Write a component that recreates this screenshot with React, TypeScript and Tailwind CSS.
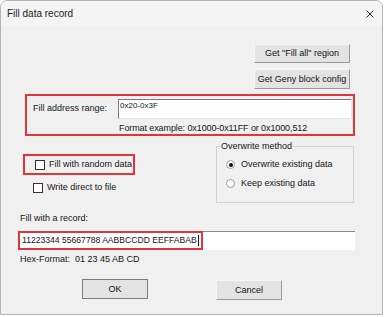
import React from 'react';

const font = "font-['Liberation_Sans',Arial,sans-serif]";

const WinButton: React.FC<{ label: string; className?: string; isDefault?: boolean }> = ({ label, className = '', isDefault }) => (
  <button
    type="button"
    className={`flex items-center justify-center bg-[#e3e3e3] text-[9px] leading-[11px] text-[#111] border ${
      isDefault
        ? 'border-[#7c7c7c]'
        : 'border-t-[#f6f6f6] border-l-[#f6f6f6] border-r-[#9a9a9a] border-b-[#9a9a9a]'
    } ${className}`}
  >
    {label}
  </button>
);

const Check: React.FC<{ label: string }> = ({ label }) => (
  <div className="flex items-center gap-[4px]">
    <span className="w-[10px] h-[10px] bg-white border border-[#333]" />
    <span className="leading-[11px]">{label}</span>
  </div>
);

const Radio: React.FC<{ label: string; checked?: boolean }> = ({ label, checked }) => (
  <div className="flex items-center gap-[6px] h-[11px]">
    <span className="w-[9px] h-[9px] rounded-full bg-white border border-[#9a9a9a] flex items-center justify-center">
      {checked && <span className="w-[4px] h-[4px] rounded-full bg-[#111]" />}
    </span>
    <span className="leading-[11px]">{label}</span>
  </div>
);

export default function App() {
  return (
    <div className={`w-[385px] h-[317px] bg-white ${font} text-[9px] text-[#151515]`}>
      <div className="w-[383px] h-[315px] border border-[#b4b4b4] rounded-t-[7px] bg-[#f0f0f0] overflow-hidden flex flex-col">
        {/* title bar */}
        <div className="h-[25px] shrink-0 flex items-center justify-between pl-[6px] pr-[7px] bg-[#f4f4f4]">
          <span className="text-[10px] leading-[12px] text-[#1a1a1a]">Fill data record</span>
          <svg width="8" height="8" viewBox="0 0 8 8" className="mr-[1px]">
            <path d="M0.5 0.5 L7.5 7.5 M7.5 0.5 L0.5 7.5" stroke="#333" strokeWidth="1" />
          </svg>
        </div>

        {/* region buttons */}
        <div className="ml-[253px] mt-[18px] flex flex-col gap-[6px]">
          <WinButton label={'Get "Fill all" region'} className="w-[96px] h-[19px]" />
          <WinButton label="Get Geny block config" className="w-[96px] h-[20px]" />
        </div>

        {/* address range */}
        <div className="ml-[24px] mt-[5px] w-[330px] h-[42px] border-2 border-[#e3343c] flex flex-col">
          <div className="flex mt-[3px]">
            <span className="pl-[6px] h-[20px] flex items-center">Fill address range:</span>
            <div className="ml-auto mr-[1px] w-[234px] h-[20px] bg-white border-t border-l border-t-[#7a7a7a] border-l-[#7a7a7a] border-r border-b border-r-[#e8e8e8] border-b-[#e8e8e8] pl-[1px] text-[8px] leading-[11px]">
              0x20-0x3F
            </div>
          </div>
          <span className="ml-[92px] mt-[4px] leading-[11px] tracking-[-0.1px]">Format example: 0x1000-0x11FF or 0x1000,512</span>
        </div>

        {/* options */}
        <div className="flex mt-[5px]">
          <div className="ml-[22px] w-[112px] flex flex-col">
            <div className="mt-[13px] w-[112px] h-[21px] border-2 border-[#e3343c] flex items-center pl-[10px]">
              <Check label="Fill with random data" />
            </div>
            <div className="mt-[7px] ml-[10px]">
              <Check label="Write direct to file" />
            </div>
          </div>
          <fieldset className="ml-[81px] w-[138px] h-[62px] border border-[#d2d2d2]">
            <legend className="ml-[3px] px-[1px] leading-[10px]">Overwrite method</legend>
            <div className="mt-[8px] pl-[9px] flex flex-col gap-[8px]">
              <Radio label="Overwrite existing data" checked />
              <Radio label="Keep existing data" />
            </div>
          </fieldset>
        </div>

        {/* record */}
        <span className="ml-[19px] mt-[10px] leading-[11px]">Fill with a record:</span>
        <div className="ml-[17px] mt-[7px] w-[337px] h-[19px] bg-white border-t border-t-[#8a8a8a] flex">
          <div className="w-[185px] h-[19px] -mt-[1px] border-2 border-[#e3343c] flex items-center pl-[2px] whitespace-nowrap">
            <span className="leading-[11px] text-[8.6px]">11223344 55667788 AABBCCDD EEFFABAB</span>
            <span className="ml-[1px] w-[1px] h-[11px] bg-[#111]" />
          </div>
        </div>
        <span className="ml-[19px] mt-[4px] leading-[11px] whitespace-pre">Hex-Format:  01 23 45 AB CD</span>

        {/* dialog buttons */}
        <div className="flex items-start mt-[14px]">
          <WinButton label="OK" isDefault className="ml-[81px] w-[66px] h-[20px]" />
          <WinButton label="Cancel" className="ml-[68px] mt-[1px] w-[66px] h-[20px]" />
        </div>
      </div>
    </div>
  );
}
